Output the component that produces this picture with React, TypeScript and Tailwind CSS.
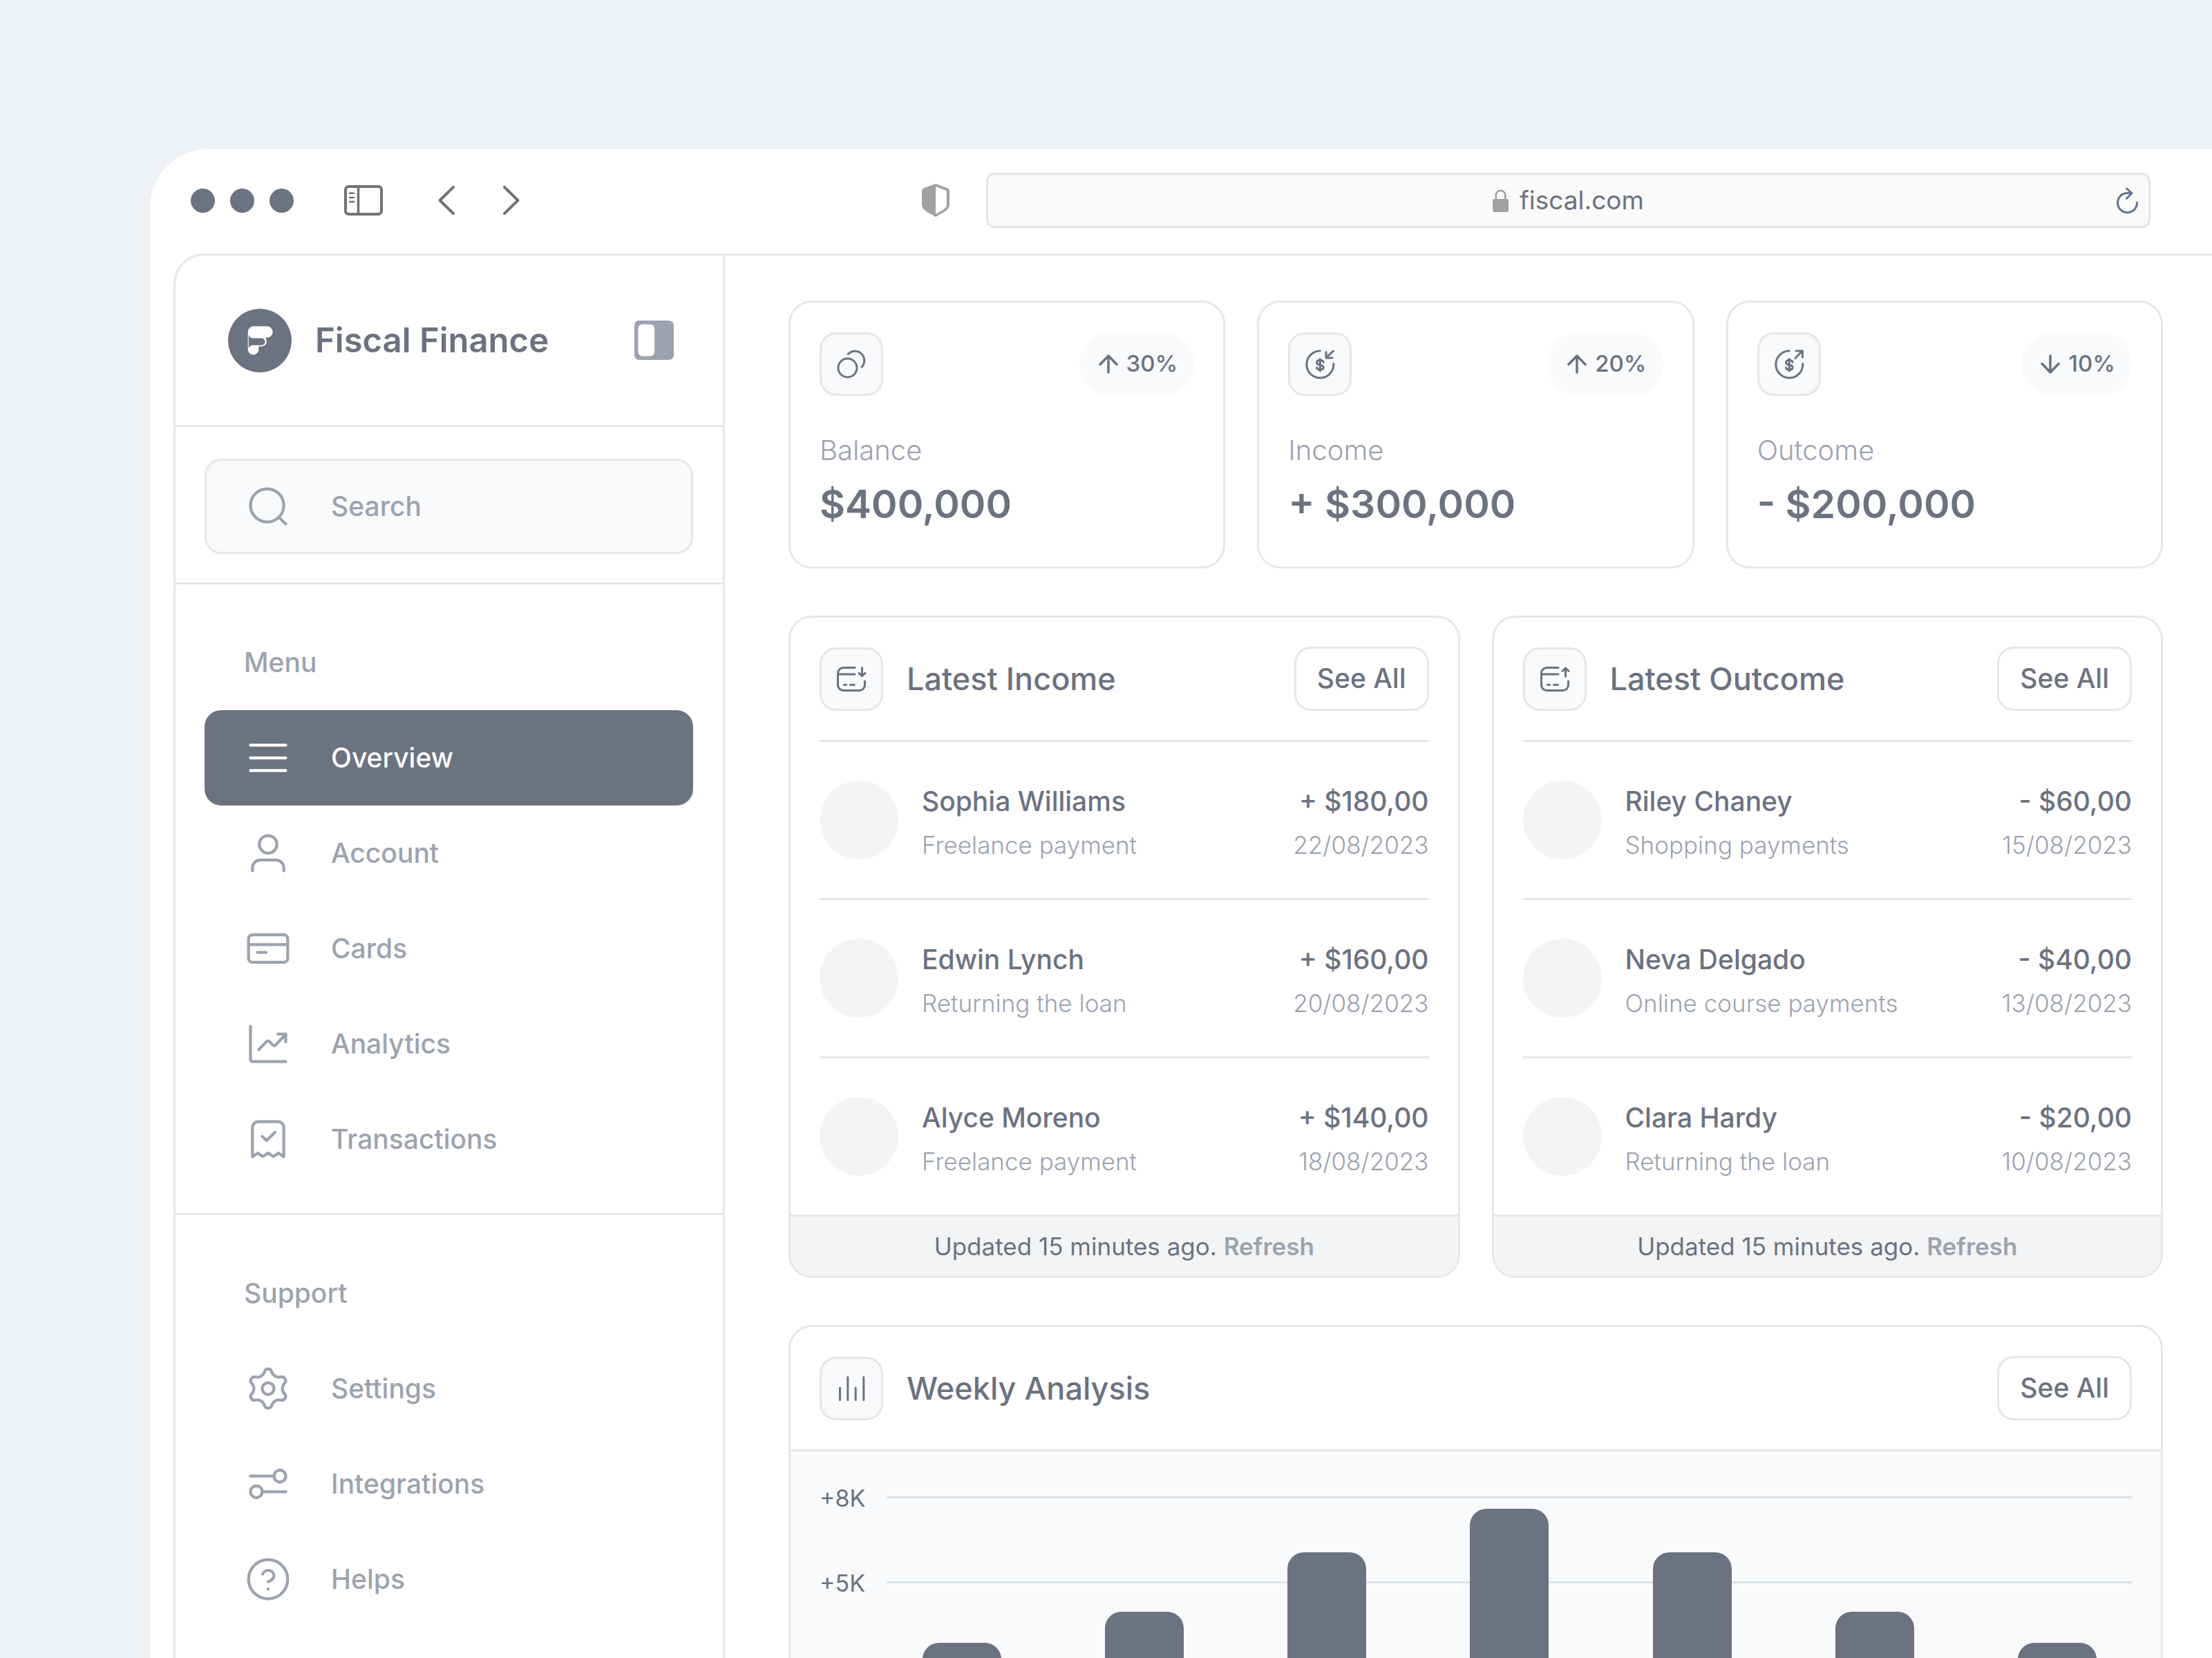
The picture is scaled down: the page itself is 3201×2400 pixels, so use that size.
import type { ReactNode } from "react";

type NavItem = {
  label: string;
  icon: ReactNode;
  active?: boolean;
};

type Stat = {
  label: string;
  amount: string;
  change: string;
  direction: "up" | "down";
  icon: ReactNode;
};

type Transaction = {
  name: string;
  note: string;
  amount: string;
  date: string;
};

/* ---------- icons ---------- */

function NavIcon({ children }: { children: ReactNode }) {
  return (
    <svg
      className="size-17 shrink-0"
      viewBox="0 0 24 24"
      fill="none"
      stroke="currentColor"
      strokeWidth="1.5"
      strokeLinecap="round"
      strokeLinejoin="round"
      aria-hidden="true"
    >
      {children}
    </svg>
  );
}

function TileIcon({ children }: { children: ReactNode }) {
  return (
    <span className="flex size-23 shrink-0 items-center justify-center rounded-3xl border-3 border-gray-200 bg-slate-50 text-[#6b7280]">
      <svg
        className="size-[46px]"
        viewBox="0 0 46 46"
        fill="none"
        stroke="currentColor"
        strokeWidth="3"
        strokeLinecap="round"
        strokeLinejoin="round"
        aria-hidden="true"
      >
        {children}
      </svg>
    </span>
  );
}

const coinPath = (
  <>
    <path d="M23.3 4a19.5 19.5 0 1 0 19.5 18.5" />
    <path d="M28 20.5c-.3-1.9-1.7-3-3.6-3h-2.2c-2.1 0-3.7 1.3-3.7 3.2 0 1.8 1.3 2.5 3 3l3.6 1c1.8.5 3.1 1.2 3.1 3 0 2-1.6 3.3-3.7 3.3h-2.3c-2 0-3.5-1.2-3.7-3.1M23.3 15.5v17.5" />
  </>
);

const cardPath = (
  <path d="M28 6.5H11.5a8 8 0 0 0-8 8v17a8 8 0 0 0 8 8h23a8 8 0 0 0 8-8V26M3.5 16H28M12.5 31.3h3M21.5 31.3h6" />
);

function Logo() {
  return (
    <svg className="size-23 shrink-0" viewBox="0 0 92 92" aria-hidden="true">
      <circle cx="46" cy="46" r="46" fill="#6b7280" />
      <path
        fill="#fff"
        d="M36.9 25.3h19.6a8.2 8.2 0 0 1 0 16.4h-2.6c1.2 1.6 1.9 3.7 1.9 5.8 0 4-3.3 7-7.3 7h-4.2v4.2a7.8 7.8 0 0 1-15.6 0V33.5a8.2 8.2 0 0 1 8.2-8.2z"
      />
      <path
        fill="#6b7280"
        d="M29.8 37.5c.5 2.8 2.7 5 5.6 5h13a5.1 5.1 0 0 1 0 10.3H36.3c-3.3 0-5.9 2-6.5 5z"
      />
    </svg>
  );
}

/* ---------- data ---------- */

const menu: NavItem[] = [
  { label: "Overview", active: true, icon: <path d="M3 5.5h18M3 12h18M3 18.5h18" /> },
  {
    label: "Account",
    icon: (
      <>
        <circle cx="12" cy="7.5" r="4.5" />
        <path d="M4 21v-1.5a4 4 0 0 1 4-4h8a4 4 0 0 1 4 4V21" />
      </>
    ),
  },
  {
    label: "Cards",
    icon: (
      <>
        <rect x="2" y="5" width="20" height="14" rx="2" />
        <path d="M2 10h20M6.5 14h4.5" />
      </>
    ),
  },
  {
    label: "Analytics",
    icon: (
      <path d="M3 3v17a1 1 0 0 0 1 1h17M7.2 15l4.1-4.2a1 1 0 0 1 1.4 0l1.7 1.8a1 1 0 0 0 1.4 0L21 7.2M17 7h4v4" />
    ),
  },
  {
    label: "Transactions",
    icon: (
      <>
        <path d="M4 6a3 3 0 0 1 3-3h10a3 3 0 0 1 3 3v15l-2.7-1.9-2.6 1.7-2.7-1.7-2.7 1.7-2.6-1.7L4 21z" />
        <path d="m9 10.6 2.2 2.1 4.3-4.2" />
      </>
    ),
  },
];

const support: NavItem[] = [
  {
    label: "Settings",
    icon: (
      <>
        <circle cx="12" cy="12" r="3" />
        <path d="M10.18 3.36a1.9 1.9 0 0 1 3.64 0A3.98 3.98 0 0 0 18.57 6.1 1.9 1.9 0 0 1 20.39 9.26 3.98 3.98 0 0 0 20.39 14.74 1.9 1.9 0 0 1 18.57 17.9 3.98 3.98 0 0 0 13.82 20.64a1.9 1.9 0 0 1-3.64 0A3.98 3.98 0 0 0 5.43 17.9 1.9 1.9 0 0 1 3.61 14.74 3.98 3.98 0 0 0 3.61 9.26 1.9 1.9 0 0 1 5.43 6.1 3.98 3.98 0 0 0 10.18 3.36z" />
      </>
    ),
  },
  {
    label: "Integrations",
    icon: (
      <>
        <circle cx="18" cy="8" r="3" />
        <circle cx="6" cy="16" r="3" />
        <path d="M3 8h12M9 16h12" />
      </>
    ),
  },
  {
    label: "Helps",
    icon: (
      <>
        <circle cx="12" cy="12" r="10" />
        <path d="M9.2 9.4a3 3 0 0 1 5.8.8c0 2-3 3.1-3 3.1M12 17h.01" />
      </>
    ),
  },
];

const stats: Stat[] = [
  {
    label: "Balance",
    amount: "$400,000",
    change: "30%",
    direction: "up",
    icon: (
      <>
        <circle cx="17.5" cy="28.5" r="13.5" />
        <path d="M18.3 8.5A13.5 13.5 0 1 1 38 27.2" />
      </>
    ),
  },
  {
    label: "Income",
    amount: "+ $300,000",
    change: "20%",
    direction: "up",
    icon: (
      <>
        {coinPath}
        <path d="M42.5 4 32 14M32 5.5V14h9" />
      </>
    ),
  },
  {
    label: "Outcome",
    amount: "- $200,000",
    change: "10%",
    direction: "down",
    icon: (
      <>
        {coinPath}
        <path d="M32 14.5 42 4M33 4h9.5v9" />
      </>
    ),
  },
];

const income: Transaction[] = [
  { name: "Sophia Williams", note: "Freelance payment", amount: "+ $180,00", date: "22/08/2023" },
  { name: "Edwin Lynch", note: "Returning the loan", amount: "+ $160,00", date: "20/08/2023" },
  { name: "Alyce Moreno", note: "Freelance payment", amount: "+ $140,00", date: "18/08/2023" },
];

const outcome: Transaction[] = [
  { name: "Riley Chaney", note: "Shopping payments", amount: "- $60,00", date: "15/08/2023" },
  { name: "Neva Delgado", note: "Online course payments", amount: "- $40,00", date: "13/08/2023" },
  { name: "Clara Hardy", note: "Returning the loan", amount: "- $20,00", date: "10/08/2023" },
];

const week = [190, 235, 321, 384, 321, 235, 190];
const gridLines = ["+8K", "+5K"];

/* ---------- browser bar ---------- */

function BrowserBar() {
  return (
    <header className="flex h-[151px] shrink-0 items-center pb-[3px]">
      <div className="flex w-[1210px] shrink-0 items-center pr-[53px] pl-[59px]">
        <div className="flex gap-[22px]">
          <span className="size-[35px] rounded-full bg-[#6b7280]" />
          <span className="size-[35px] rounded-full bg-[#6b7280]" />
          <span className="size-[35px] rounded-full bg-[#6b7280]" />
        </div>

        <button type="button" aria-label="Toggle sidebar" className="ml-[73px] text-neutral-500">
          <svg className="h-11 w-14" viewBox="0 0 56 44" fill="none" stroke="currentColor" strokeLinecap="round">
            <rect x="2" y="2" width="52" height="40" rx="4.5" strokeWidth="4" />
            <path d="M20.5 3v38" strokeWidth="3.5" />
            <path d="M8 11.8h6M8 17.9h6M8 24h6" strokeWidth="2.5" />
          </svg>
        </button>

        <button type="button" aria-label="Back" className="ml-20 text-neutral-500">
          <svg className="h-[42px] w-6" viewBox="0 0 24 42" fill="none" stroke="currentColor" strokeWidth="4" strokeLinecap="round" strokeLinejoin="round">
            <path d="M22 2 2.5 21 22 40" />
          </svg>
        </button>
        <button type="button" aria-label="Forward" className="ml-[70px] text-neutral-500">
          <svg className="h-[42px] w-6" viewBox="0 0 24 42" fill="none" stroke="currentColor" strokeWidth="4" strokeLinecap="round" strokeLinejoin="round">
            <path d="m2 2 19.5 19L2 40" />
          </svg>
        </button>

        <svg className="ml-auto h-12 w-10 text-neutral-400" viewBox="0 0 40 48" aria-hidden="true">
          <path fill="currentColor" d="M20 0l17.5 6.5Q40 7.5 40 10v19.500C40 38.5 31 41 20 48 9 41 0 38.5 0 29.5V10q0-2.5 2.5-3.5z" />
          <path fill="#fff" d="M20 4.2l14.5 5.3q1.5.5 1.5 2v18C36 36.5 29 38.5 20 43.7z" />
        </svg>
      </div>

      <div className="mr-[89px] flex h-20 min-w-0 flex-1 items-center rounded-xl border-3 border-neutral-200 bg-neutral-50 pr-[14px] pl-[46px]">
        <label className="flex flex-1 items-center justify-center gap-4">
          <svg className="h-[33px] w-[23px] text-neutral-400" viewBox="0 0 23 33" aria-hidden="true">
            <rect y="14" width="23" height="19" rx="3" fill="currentColor" />
            <path d="M4.8 15V8.5a6.7 6.7 0 0 1 13.4 0V15" fill="none" stroke="currentColor" strokeWidth="2.5" />
          </svg>
          <input
            aria-label="Address"
            defaultValue="fiscal.com"
            className="field-sizing-content bg-transparent text-[37px] leading-[50px] text-[#6b7280] outline-none"
          />
        </label>
        <button type="button" aria-label="Reload" className="text-slate-500">
          <svg className="h-[38px] w-8" viewBox="0 0 32 38" fill="none" stroke="currentColor" strokeWidth="3" strokeLinecap="round" strokeLinejoin="round">
            <path d="M29.5 22A14 14 0 1 1 15.5 8.5h6.5M14.5 2 22 8.7l-7.5 7.5" />
          </svg>
        </button>
      </div>
    </header>
  );
}

/* ---------- sidebar ---------- */

function NavGroup({ title, items }: { title: string; items: NavItem[] }) {
  return (
    <nav aria-label={title} className="pt-11 pr-[43px] pb-[38px] pl-[42px] text-[39px] font-medium text-[#9ca3af]">
      <h2 className="flex h-[138px] items-center pl-[57px]">{title}</h2>
      <ul>
        {items.map((item) => (
          <li key={item.label}>
            <a
              href="#"
              aria-current={item.active ? "page" : undefined}
              className={
                item.active
                  ? "flex h-[138px] items-center gap-[57px] rounded-3xl bg-[#6b7280] pl-[58px] text-white"
                  : "flex h-[138px] items-center gap-[57px] rounded-3xl pl-[58px]"
              }
            >
              <NavIcon>{item.icon}</NavIcon>
              {item.label}
            </a>
          </li>
        ))}
      </ul>
    </nav>
  );
}

function Sidebar() {
  return (
    <aside className="w-[795px] shrink-0 divide-y-3 divide-gray-200 border-r-3 border-gray-200">
      <div className="flex h-[248px] items-center pr-[71px] pl-[76px]">
        <Logo />
        <h1 className="ml-[34px] text-[49px] font-semibold text-[#6b7280]">Fiscal Finance</h1>
        <button type="button" aria-label="Collapse menu" className="ml-auto text-[#9ca3af]">
          <svg className="size-[57px]" viewBox="0 0 57 57">
            <rect width="57" height="57" rx="7" fill="currentColor" />
            <rect x="5.5" y="5.5" width="23.5" height="46" rx="6" fill="#fff" />
          </svg>
        </button>
      </div>

      <div className="pt-[46px] pr-[43px] pb-[41px] pl-[42px]">
        <label className="flex h-[138px] items-center gap-[57px] rounded-3xl border-3 border-gray-200 bg-slate-50 pl-[55px] text-[#9ca3af]">
          <NavIcon>
            <circle cx="11.5" cy="11.5" r="8.5" />
            <path d="m17.8 17.8 3.2 3.2" />
          </NavIcon>
          <input
            type="search"
            placeholder="Search"
            aria-label="Search"
            className="min-w-0 flex-1 bg-transparent text-[39px] font-medium outline-none placeholder:text-[#9ca3af]"
          />
        </label>
      </div>

      <NavGroup title="Menu" items={menu} />
      <NavGroup title="Support" items={support} />
    </aside>
  );
}

/* ---------- cards ---------- */

function StatCard({ stat }: { stat: Stat }) {
  return (
    <section className="rounded-[34px] border-3 border-gray-200 px-[42px] pt-[43px] pb-[50px]">
      <div className="flex items-center justify-between">
        <TileIcon>{stat.icon}</TileIcon>
        <span className="flex h-23 items-center gap-3 rounded-full bg-slate-50 pr-6 pl-7 text-[33px] font-medium text-[#6b7280]">
          <svg className="size-7" viewBox="0 0 28 28" fill="none" stroke="currentColor" strokeWidth="3.5" strokeLinecap="round" strokeLinejoin="round" aria-hidden="true">
            {stat.direction === "up" ? (
              <path d="M14 26V2M2 14.5 14 2l12 12.5" />
            ) : (
              <path d="M14 2v24M2 13.5 14 26l12-12.5" />
            )}
          </svg>
          {stat.change}
        </span>
      </div>
      <p className="mt-[49px] text-[40px] leading-[60px] font-light text-[#9ca3af]">{stat.label}</p>
      <p className="mt-2 text-[57px] leading-20 font-semibold text-[#6b7280]">{stat.amount}</p>
    </section>
  );
}

function CardHeader({ title, icon }: { title: string; icon: ReactNode }) {
  return (
    <div className="flex items-center py-[42px]">
      <TileIcon>{icon}</TileIcon>
      <h2 className="ml-[34px] text-[45px] font-medium text-[#6b7280]">{title}</h2>
      <button
        type="button"
        className="ml-auto h-[93px] rounded-3xl border-3 border-gray-200 px-[30px] text-[39px] font-medium text-[#6b7280]"
      >
        See All
      </button>
    </div>
  );
}

function TransactionCard({ title, icon, items }: { title: string; icon: ReactNode; items: Transaction[] }) {
  return (
    <section className="overflow-hidden rounded-[34px] border-3 border-gray-200">
      <div className="px-[42px]">
        <CardHeader title={title} icon={icon} />
        <ul className="divide-y-3 divide-gray-200 border-t-3 border-gray-200">
          {items.map((item) => (
            <li key={item.name} className="flex h-[229px] items-center gap-[34px] last:h-[226px]">
              <span className="size-[114px] shrink-0 rounded-full bg-gray-100" />
              <div className="flex flex-1 flex-col gap-2">
                <p className="text-[39px] leading-16 font-medium text-[#6b7280]">{item.name}</p>
                <p className="text-[35px] leading-[46px] font-light text-[#9ca3af]">{item.note}</p>
              </div>
              <div className="flex flex-col gap-2 text-right">
                <p className="text-[39px] leading-16 font-medium text-[#6b7280]">{item.amount}</p>
                <p className="text-[35px] leading-[46px] font-light text-[#9ca3af]">{item.date}</p>
              </div>
            </li>
          ))}
        </ul>
      </div>
      <p className="border-t-3 border-gray-200 bg-gray-100 text-center text-[35px] leading-[86px] text-[#6b7280]">
        Updated 15 minutes ago.{" "}
        <button type="button" className="font-semibold text-[#9ca3af]">
          Refresh
        </button>
      </p>
    </section>
  );
}

function WeeklyAnalysis() {
  return (
    <section className="overflow-hidden rounded-[34px] border-3 border-gray-200">
      <div className="px-[42px]">
        <CardHeader title="Weekly Analysis" icon={<path d="M6.5 22v17.5M17.8 6.5v33M29.2 22v17.5M40.8 6.5v33" />} />
      </div>
      <div className="border-t-3 border-gray-200 bg-slate-50 px-[42px] pt-10">
        <div className="relative h-[427px]">
          {gridLines.map((line) => (
            <div key={line} className="flex h-[123px] items-start">
              <span className="w-[97px] text-[34px] leading-14 text-[#6b7280]">{line}</span>
              <span className="mt-[25px] h-[3px] flex-1 bg-[#dee4e9]" />
            </div>
          ))}
          <div className="absolute inset-x-0 bottom-0 flex items-end justify-between pr-[51px] pl-[149px]">
            {week.map((height, day) => (
              <span key={day} className="w-[114px] rounded-t-3xl bg-[#6b7280]" style={{ height }} />
            ))}
          </div>
        </div>
      </div>
    </section>
  );
}

export default function App() {
  return (
    <div className="flex h-screen overflow-hidden bg-[#eef2f7] pt-[216px] pl-[217px] font-['Inter',sans-serif]">
      <div className="flex min-w-0 flex-1 flex-col rounded-tl-[84px] bg-white">
        <BrowserBar />
        <div className="ml-[34px] flex min-h-0 flex-1 overflow-hidden rounded-tl-[44px] border-t-3 border-l-3 border-gray-200">
          <Sidebar />
          <main className="flex min-w-0 flex-1 flex-col gap-17 pt-[65px] pr-[71px] pl-[92px]">
            <div className="grid shrink-0 grid-cols-3 gap-[46px]">
              {stats.map((stat) => (
                <StatCard key={stat.label} stat={stat} />
              ))}
            </div>

            <div className="grid shrink-0 grid-cols-2 gap-[46px]">
              <TransactionCard
                title="Latest Income"
                items={income}
                icon={
                  <>
                    {cardPath}
                    <path d="M38.5 6.5v12M34 14.3l4.5 4.2 4.5-4.2" />
                  </>
                }
              />
              <TransactionCard
                title="Latest Outcome"
                items={outcome}
                icon={
                  <>
                    {cardPath}
                    <path d="M38.5 19V7M34 11.3 38.5 7l4.5 4.3" />
                  </>
                }
              />
            </div>

            <div className="shrink-0">
              <WeeklyAnalysis />
            </div>
          </main>
        </div>
      </div>
    </div>
  );
}
